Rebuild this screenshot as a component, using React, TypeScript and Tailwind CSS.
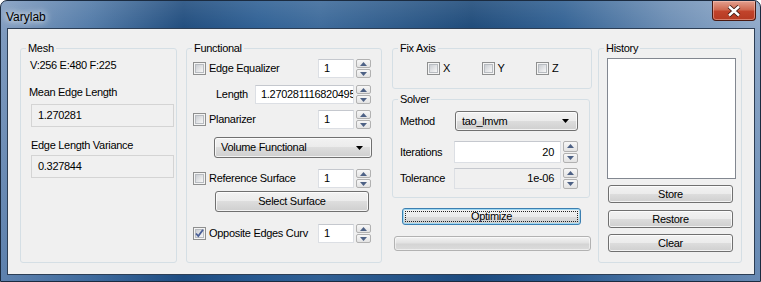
import React from 'react';

const btnBg =
  'border border-[#707070] rounded-[3px] bg-[linear-gradient(#f2f2f2_0%,#ebebeb_50%,#dddddd_50%,#cfcfcf_100%)] shadow-[inset_0_0_0_1px_rgba(255,255,255,0.75)]';

function CheckBox({ checked = false }: { checked?: boolean }) {
  return (
    <span className="relative flex h-[13px] w-[13px] shrink-0 items-center justify-center border border-[#8e8f8f] bg-[#f4f4f4]">
      <span className="h-[9px] w-[9px] border border-[#b8bcc1] bg-[linear-gradient(135deg,#cbced3,#f7f7f7)]" />
      {checked && (
        <svg className="absolute left-0 top-0" width="11" height="11" viewBox="0 0 11 11">
          <path d="M2 5.5 L4.3 8 L9 1.8" fill="none" stroke="#4a5f97" strokeWidth="1.8" />
        </svg>
      )}
    </span>
  );
}

function Arrow({ up }: { up?: boolean }) {
  return (
    <svg width="7" height="4" viewBox="0 0 7 4">
      <path d={up ? 'M0 4 L3.5 0 L7 4 Z' : 'M0 0 L7 0 L3.5 4 Z'} fill="#4d6185" />
    </svg>
  );
}

function SpinBox({
  value,
  w,
  h = 19,
  right = false,
  disabled = false,
}: {
  value: string;
  w: number;
  h?: number;
  right?: boolean;
  disabled?: boolean;
}) {
  return (
    <div className="flex gap-[1px]" style={{ height: h }}>
      <div
        className={`flex items-center overflow-hidden whitespace-nowrap border border-[#dcdfe4] border-t-[#c5c8ce] ${
          disabled ? 'bg-[#f0f0f0]' : 'bg-white'
        } ${right ? 'justify-end pr-[6px]' : 'pl-[5px]'}`}
        style={{ width: w }}
      >
        {value}
      </div>
      <div className="ml-[1px] flex w-[15px] flex-col gap-[1px]">
        <div className="flex flex-1 items-center justify-center rounded-[2px] border border-[#b1b1b1] bg-[linear-gradient(#f7f7f7,#e3e3e3)]">
          <Arrow up />
        </div>
        <div className="flex flex-1 items-center justify-center rounded-[2px] border border-[#b1b1b1] bg-[linear-gradient(#f7f7f7,#e3e3e3)]">
          <Arrow />
        </div>
      </div>
    </div>
  );
}

function Combo({ text, className }: { text: string; className: string }) {
  return (
    <div className={`flex items-center ${btnBg} ${className}`}>
      <span className="pl-[6px]">{text}</span>
      <svg className="ml-auto mr-[8px]" width="7" height="4" viewBox="0 0 7 4">
        <path d="M0 0 L7 0 L3.5 4 Z" fill="#000" />
      </svg>
    </div>
  );
}

function Button({ text, className }: { text: string; className: string }) {
  return <div className={`flex items-center justify-center ${btnBg} ${className}`}>{text}</div>;
}

function Group({
  title,
  className,
  children,
}: {
  title: string;
  className: string;
  children?: React.ReactNode;
}) {
  return (
    <fieldset className={`rounded-[3px] border border-[#d5dfe5] ${className}`}>
      <legend className="ml-[5px] px-[2px] leading-[14px]">{title}</legend>
      {children}
    </fieldset>
  );
}

function CheckRow({
  label,
  checked,
  className,
}: {
  label: string;
  checked?: boolean;
  className: string;
}) {
  return (
    <div className={`flex h-[19px] items-center pl-[6px] pr-[10px] ${className}`}>
      <CheckBox checked={checked} />
      <span className="ml-[3px]">{label}</span>
      <div className="ml-auto">
        <SpinBox value="1" w={36} />
      </div>
    </div>
  );
}

export default function App() {
  return (
    <div className="flex h-[282px] w-[761px] flex-col overflow-hidden rounded-t-[7px] border border-[#1b2b40] bg-[linear-gradient(180deg,rgba(255,255,255,0.12)_0%,rgba(255,255,255,0)_12%,rgba(30,80,140,0.35)_100%),linear-gradient(90deg,#7f9bbf_0%,#4f78a6_12%,#1d4a7c_24%,#2c5e93_34%,#3a6899_42%,#1b4878_62%,#2f5f92_74%,#6a8cb3_88%,#8ea8c8_100%)] font-['Liberation_Sans',Arial,sans-serif] text-[11px] tracking-[-0.3px] text-black">
      <div className="flex h-[27px] shrink-0 items-start">
        <span className="ml-[5px] mt-[7px] text-[12px] tracking-normal text-black [text-shadow:0_0_6px_#fff,0_0_10px_rgba(255,255,255,0.8)]">
          Varylab
        </span>
        <div className="ml-auto mr-[4px] flex h-[20px] w-[44px] items-center justify-center rounded-b-[4px] border border-t-0 border-[#4a1a12] bg-[linear-gradient(#e3a08f_0%,#cf6a52_45%,#c1432b_55%,#b53a22_100%)] shadow-[inset_0_0_0_1px_rgba(255,210,200,0.45)]">
          <svg width="14" height="12" viewBox="0 0 14 12">
            <path d="M2 1.5 L12 10.5 M12 1.5 L2 10.5" stroke="#3b1a15" strokeWidth="4.2" />
            <path d="M2 1.5 L12 10.5 M12 1.5 L2 10.5" stroke="#fff" strokeWidth="2.4" />
          </svg>
        </div>
      </div>

      <div className="mb-[6px] ml-[6px] mr-[5px] flex flex-1 items-start border border-[#2c3e55] bg-[#f0f0f0] pt-[12px]">
        <Group title="Mesh" className="ml-[12px] h-[222px] w-[157px] shrink-0">
          <div className="ml-[9px] mt-[3px] leading-[14px]">V:256 E:480 F:225</div>
          <div className="ml-[8px] mt-[13px] leading-[14px]">Mean Edge Length</div>
          <div className="ml-[10px] mt-[5px] flex h-[23px] w-[143px] items-center border border-[#d4d4d4] pl-[6px]">1.270281</div>
          <div className="ml-[10px] mt-[11px] leading-[14px]">Edge Length Variance</div>
          <div className="ml-[10px] mt-[3px] flex h-[23px] w-[143px] items-center border border-[#d4d4d4] pl-[6px]">0.327844</div>
        </Group>

        <Group title="Functional" className="ml-[9px] h-[222px] w-[196px] shrink-0">
          <CheckRow label="Edge Equalizer" className="mt-[4px]" />
          <div className="mt-[7px] flex h-[19px] items-center pl-[29px] pr-[10px]">
            <span>Length</span>
            <div className="ml-auto">
              <SpinBox value="1.270281116820495" w={99} />
            </div>
          </div>
          <CheckRow label="Planarizer" className="mt-[6px]" />
          <Combo text="Volume Functional" className="ml-[27px] mt-[8px] h-[21px] w-[158px]" />
          <CheckRow label="Reference Surface" className="mt-[11px]" />
          <Button text="Select Surface" className="ml-[28px] mt-[3px] h-[21px] w-[154px]" />
          <CheckRow label="Opposite Edges Curv" checked className="mt-[12px]" />
        </Group>

        <div className="ml-[10px] flex w-[198px] shrink-0 flex-col">
          <Group title="Fix Axis" className="h-[48px]">
            <div className="mt-[5px] flex pl-[34px]">
              {['X', 'Y', 'Z'].map((a) => (
                <div key={a} className="flex w-[54.5px] items-center">
                  <CheckBox />
                  <span className="ml-[3px]">{a}</span>
                </div>
              ))}
            </div>
          </Group>
          <Group title="Solver" className="mt-[3px] h-[106px]">
            <div className="mt-[5px] flex h-[20px] items-center pl-[7px]">
              <span className="w-[55px]">Method</span>
              <Combo text="tao_lmvm" className="h-[20px] w-[123px]" />
            </div>
            <div className="mt-[10px] flex h-[22px] items-center pl-[7px]">
              <span className="w-[54px]">Iterations</span>
              <SpinBox value="20" w={107} h={22} right />
            </div>
            <div className="mt-[5px] flex h-[21px] items-center pl-[7px]">
              <span className="w-[54px]">Tolerance</span>
              <SpinBox value="1e-06" w={107} h={21} right disabled />
            </div>
          </Group>
          <div className="ml-[10px] mt-[10px] flex h-[17px] w-[179px] items-center justify-center rounded-[3px] border border-[#3c7fb1] bg-[linear-gradient(#f2f2f2_0%,#ebebeb_50%,#dddddd_50%,#cfcfcf_100%)] p-[2px] shadow-[inset_0_0_0_1px_#9fd8f2]">
            <div className="flex h-full w-full items-center justify-center border border-dotted border-[#222]">Optimize</div>
          </div>
          <div className="ml-[2px] mt-[11px] h-[15px] w-[197px] rounded-[3px] border border-[#b2b2b2] bg-[linear-gradient(#f3f3f3_0%,#e2e2e2_45%,#d4d4d4_55%,#dcdcdc_100%)] shadow-[inset_0_0_0_1px_rgba(255,255,255,0.5)]" />
        </div>

        <Group title="History" className="ml-[8px] h-[222px] w-[144px] shrink-0">
          <div className="ml-[8px] mt-[3px] h-[121px] w-[129px] border border-[#828790] bg-white" />
          <Button text="Store" className="ml-[9px] mt-[6px] h-[18px] w-[125px]" />
          <Button text="Restore" className="ml-[9px] mt-[7px] h-[18px] w-[125px]" />
          <Button text="Clear" className="ml-[9px] mt-[6px] h-[18px] w-[125px]" />
        </Group>
      </div>
    </div>
  );
}
